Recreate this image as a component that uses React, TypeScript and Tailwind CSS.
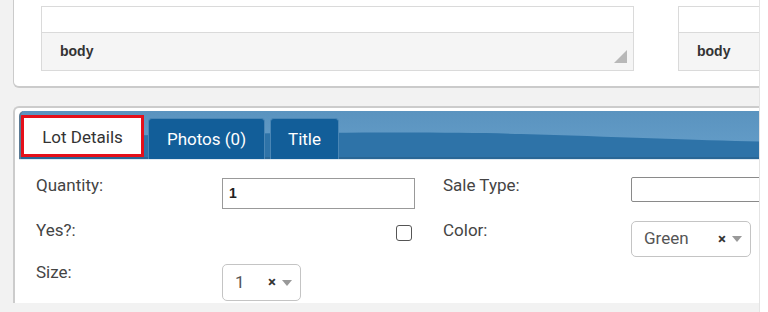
import React from 'react';

const sans = { fontFamily: 'Roboto, "Liberation Sans", sans-serif' };

function EditorBox({ width, handle }: { width: string; handle?: boolean }) {
  return (
    <div className={`${width} h-[65px] shrink-0 flex flex-col border border-[#dadada] bg-white`}>
      <div className="h-[26px] border-b border-[#dadada]" />
      <div className="relative flex-1 bg-[#f5f5f5] flex items-center pl-[18px]">
        <span className="font-['Liberation_Sans',Arial,sans-serif] font-bold text-[14px] text-[#333]">body</span>
        {handle && (
          <svg className="absolute right-[6px] bottom-[7px]" width="13" height="13" viewBox="0 0 13 13">
            <path d="M13 0 L13 13 L0 13 Z" fill="#b8b8b8" />
          </svg>
        )}
      </div>
    </div>
  );
}

function Select({ value, width, height }: { value: string; width: string; height: string }) {
  return (
    <div className={`${width} ${height} flex items-center border border-[#c4c4c4] rounded-[5px] bg-white pl-[12px] pr-[8px] text-[17px] text-[#555]`}>
      <span className="flex-1">{value}</span>
      <span className="text-[15px] font-bold text-[#333] mr-[6px] leading-none">×</span>
      <svg width="10" height="6" viewBox="0 0 10 6">
        <path d="M0 0 L10 0 L5 6 Z" fill="#999" />
      </svg>
    </div>
  );
}

export default function App() {
  return (
    <div className="w-[768px] h-[312px] bg-white overflow-hidden" style={sans}>
      <div className="w-[760px] h-full bg-[#f2f2f2] border-r border-[#e4e4e4] overflow-hidden">
        {/* Top panel with editors */}
        <div className="ml-[13px] w-[780px] h-[88px] bg-white border-x border-b-2 border-[#cbcbcb] rounded-b-[6px] flex gap-[44px] pl-[27px] pt-[6px]">
          <EditorBox width="w-[593px]" handle />
          <EditorBox width="w-[200px]" />
        </div>

        {/* Lot panel */}
        <div className="mt-[18px] ml-[13px] w-[780px] h-[197px] bg-white border-l-2 border-t-2 border-[#cccccc] rounded-tl-[6px] pl-[4px] pt-[3px]">
          <div className="relative h-[48px] rounded-tl-[5px] overflow-hidden bg-gradient-to-b from-[#5a93bf] to-[#669fca] border-l-2 border-[#5b7a94]">
            <svg className="absolute inset-0" width="760" height="48" viewBox="0 0 760 48" preserveAspectRatio="none">
              <path d="M0 27 C 200 22 400 20 500 23 S 700 30 760 31 L760 48 L0 48 Z" fill="#2e73a8" />
              <rect x="0" y="46" width="760" height="2" fill="#2a6796" />
            </svg>
            <div className="relative flex items-end h-full text-[17px]">
              <div className="w-[123px] h-[42px] mb-[2px] pt-[3px] bg-white border-[3px] border-[#e5101a] flex items-center justify-center text-[#333]">
                Lot Details
              </div>
              <div className="w-[117px] h-[41px] ml-[4px] pt-[1px] rounded-t-[4px] bg-[#125e99] border border-b-0 border-[#4a86b5] flex items-center justify-center text-white">
                Photos (0)
              </div>
              <div className="w-[69px] h-[41px] ml-[5px] pt-[1px] rounded-t-[4px] bg-[#125e99] border border-b-0 border-[#4a86b5] flex items-center justify-center text-white">
                Title
              </div>
            </div>
          </div>
          <div className="h-px bg-[#dfe9f1]" />

          {/* Form */}
          <div className="grid grid-cols-[186px_221px_188px_1fr] grid-rows-[45px_42px_45px] pl-[17px] pt-[13px] text-[17px] text-[#444]">
            <div className="leading-[24px]">Quantity:</div>
            <div>
              <div className="mt-[5px] w-[193px] h-[31px] border border-[#999] flex items-center pl-[6px] font-['Liberation_Sans',Arial,sans-serif] font-bold text-[14px] text-[#222]">
                1
              </div>
            </div>
            <div className="leading-[24px]">Sale Type:</div>
            <div>
              <div className="mt-[4px] w-[200px] h-[25px] border border-[#8a8a8a] rounded-l-[2px]" />
            </div>

            <div className="leading-[24px]">Yes?:</div>
            <div className="flex justify-end w-[193px]">
              <div className="mt-[7px] mr-[3px] w-[16px] h-[16px] border border-[#555] rounded-[3px] bg-white" />
            </div>
            <div className="leading-[24px]">Color:</div>
            <div>
              <div className="mt-[3px]">
                <Select value="Green" width="w-[120px]" height="h-[36px]" />
              </div>
            </div>

            <div className="leading-[24px]">Size:</div>
            <div>
              <div className="mt-[4px]">
                <Select value="1" width="w-[79px]" height="h-[37px]" />
              </div>
            </div>
            <div />
            <div />
          </div>
        </div>
      </div>
    </div>
  );
}
